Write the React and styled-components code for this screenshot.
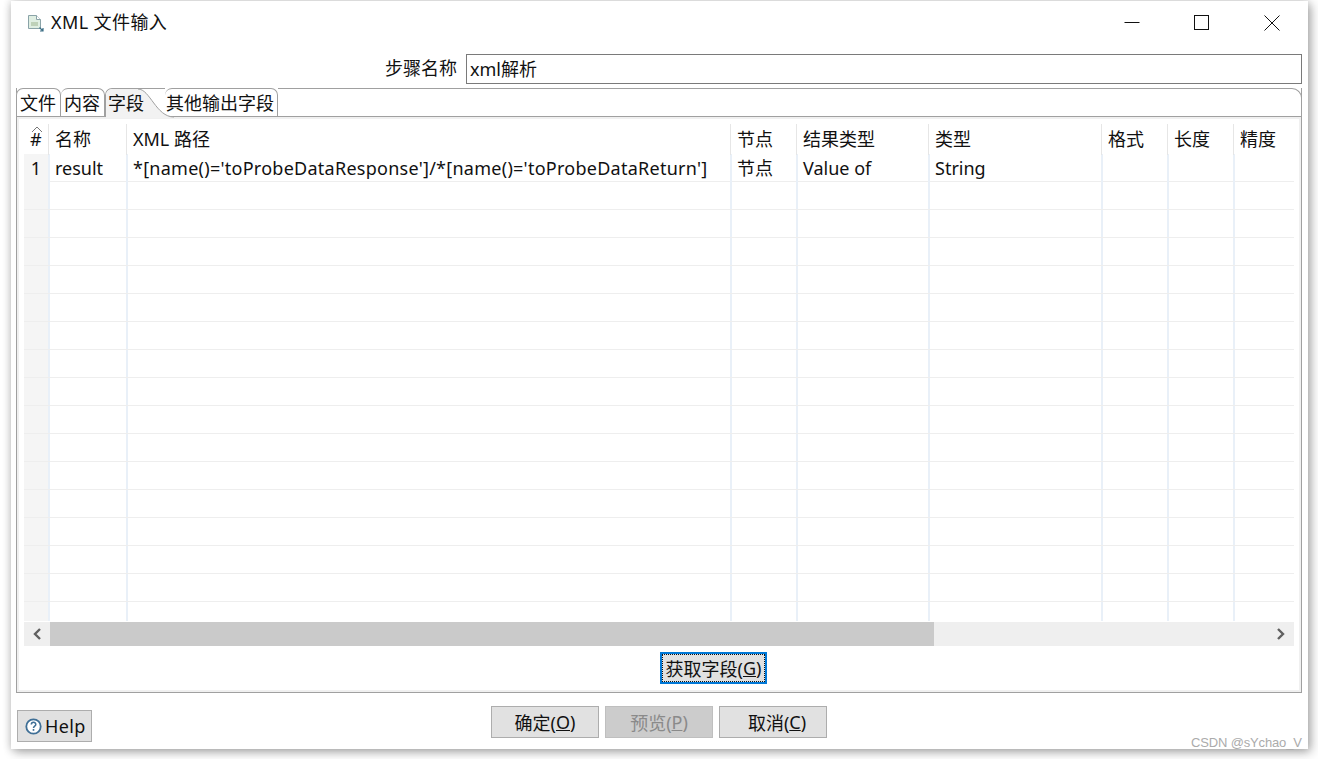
import React from "react"
import styled, { createGlobalStyle } from "styled-components"

const GlobalStyle = createGlobalStyle`
  html, body {
    margin: 0;
    padding: 0;
    background: #fff;
  }
  body {
    font-family: "Noto Sans", "Noto Sans CJK SC", sans-serif;
    font-size: 18px;
    color: #111;
  }
`

const Page = styled.div`
  position: relative;
  width: 1318px;
  height: 759px;
  padding: 1px 10px 10px 11px;
  box-sizing: border-box;
  overflow: hidden;
`

const Win = styled.div`
  height: 748px;
  background: #fff;
  display: flex;
  flex-direction: column;
  box-shadow: 3px 3px 10px rgba(0, 0, 0, 0.32), -1px 0 8px rgba(0, 0, 0, 0.14);
`

const TitleBar = styled.div`
  height: 44px;
  display: flex;
  align-items: center;
  padding-left: 16px;
  flex: none;
`

const Title = styled.span`
  margin: 0 0 2px 7px;
  line-height: 24px;
  letter-spacing: 0.4px;
`

const WinControls = styled.div`
  margin-left: auto;
  display: flex;
  padding-right: 28px;
  gap: 54px;
`

const StepRow = styled.div`
  margin-top: 9px;
  height: 30px;
  display: flex;
  align-items: center;
  justify-content: flex-end;
  gap: 9px;
  padding-right: 6px;
  flex: none;
`

const StepLabel = styled.span`
  margin-bottom: 4px;
`

const StepInput = styled.div`
  width: 836px;
  height: 30px;
  box-sizing: border-box;
  border: 1px solid #7a7a7a;
  padding-left: 3px;
  line-height: 29px;
`

const Folder = styled.div`
  margin: 4px 6px 0 5px;
  height: 605px;
  box-sizing: border-box;
  border: 1px solid #a0a0a0;
  border-top: 0;
  display: flex;
  flex-direction: column;
  flex: none;
`

const TabStrip = styled.div`
  height: 29px;
  box-sizing: border-box;
  margin: 0 -1px;
  display: flex;
  border-bottom: 1px solid #a0a0a0;
  flex: none;
`

const Tab = styled.div`
  position: relative;
  width: ${(p) => p.$w}px;
  height: 28px;
  box-sizing: border-box;
  border: 1px solid #a0a0a0;
  border-left-width: ${(p) => (p.$first ? 1 : 0)}px;
  border-bottom: 0;
  border-radius: 7px 7px 0 0;
  padding-left: 3px;
  line-height: 28px;
  white-space: nowrap;
  background: #fff;
`

const ActiveTab = styled(Tab)`
  border: 0;
  border-top: 1px solid #a0a0a0;
  border-left: 1px solid #a0a0a0;
  height: 29px;
  margin-bottom: -1px;
  border-radius: 7px 0 0 0;
  padding-left: 2px;
  background: transparent;
  z-index: 1;
`

const TabCurve = styled.svg`
  position: absolute;
  left: 0;
  top: -1px;
  z-index: -1;
`

const RestTab = styled(Tab)`
  padding-left: 1px;
`

const StripFill = styled.div`
  flex: 1;
  height: 28px;
  box-sizing: border-box;
  border: 1px solid #a0a0a0;
  border-left: 0;
  border-bottom: 0;
  border-radius: 0 10px 0 0;
`

const FolderBody = styled.div`
  flex: 1;
  box-shadow: inset 0 0 0 2px #f0f0f0;
`

const TableArea = styled.div`
  padding: 7px 7px 0 7px;
`

const Row = styled.div`
  display: grid;
  grid-template-columns: 26px 78px 604px 66px 132px 173px 66px 66px 59px;
  height: ${(p) => p.$h}px;
  box-sizing: border-box;
  border-bottom: ${(p) => (p.$line ? "1px solid #eeeeee" : "0")};
`

const HeadCell = styled.div`
  position: relative;
  padding-left: 6px;
  margin-left: -2px;
  border-left: 1px solid ${(p) => (p.$first ? "transparent" : "#e6e6e6")};
  line-height: 31px;
  white-space: nowrap;
`

const HashCell = styled(HeadCell)`
  margin-left: 0;
  padding-left: 5px;
`

const SortMark = styled.svg`
  position: absolute;
  left: 6px;
  top: 1px;
`

const Cell = styled.div`
  padding-left: 5px;
  margin-left: -2px;
  border-left: 2px solid #e9f0f8;
  line-height: 29px;
  white-space: nowrap;
  letter-spacing: ${(p) => p.$ls || "normal"};
`

const NumCell = styled.div`
  background: #f5f5f5;
  padding-right: 2px;
  text-align: center;
  line-height: 29px;
`

const ScrollBar = styled.div`
  display: flex;
  height: 24px;
  margin-top: 1px;
  background: #efefef;
`

const ScrollButton = styled.div`
  width: 26px;
  display: flex;
  align-items: center;
  justify-content: center;
  flex: none;
`

const Thumb = styled.div`
  width: 884px;
  background: #cacaca;
  flex: none;
`

const ScrollEnd = styled(ScrollButton)`
  margin-left: auto;
`

const FieldRow = styled.div`
  padding: 6px 0 0 643px;
`

const Btn = styled.div`
  width: ${(p) => p.$w || 108}px;
  height: 32px;
  box-sizing: border-box;
  background: ${(p) => (p.$off ? "#cccccc" : "#e1e1e1")};
  border: 1px solid ${(p) => (p.$off ? "#bfbfbf" : "#adadad")};
  color: ${(p) => (p.$off ? "#8a8a8a" : "#111")};
  display: flex;
  align-items: center;
  justify-content: center;
  white-space: nowrap;
  padding-left: ${(p) => p.$pl || 0}px;
`

const FocusBtn = styled(Btn)`
  width: 107px;
  border: 2px solid #0078d7;
  position: relative;
  &::after {
    content: "";
    position: absolute;
    inset: 0;
    border: 1px dotted #111;
  }
`

const Footer = styled.div`
  display: grid;
  grid-template-columns: 1fr auto 1fr;
`

const HelpBtn = styled(Btn)`
  margin: 17px 0 0 6px;
  width: 75px;
  justify-content: flex-start;
  padding-left: 7px;
  gap: 3px;
  letter-spacing: 0.4px;
`

const Actions = styled.div`
  margin: 13px 0 0 -1px;
  display: flex;
  gap: 6px;
`

const Mnemonic = styled.span`
  text-decoration: underline;
`

const Watermark = styled.span`
  position: absolute;
  left: 1191px;
  top: 735px;
  font-family: "Liberation Sans", sans-serif;
  font-size: 13px;
  line-height: 15px;
  letter-spacing: -0.15px;
  color: #ababab;
`

const XmlIcon = () => (
  <svg width="17" height="18" viewBox="0 0 17 18">
    <path d="M1.5 1.5h8l4 4v9h-12z" fill="#dfeee2" stroke="#8aa3a8" />
    <path d="M9.5 1.5v4h4" fill="#fff" stroke="#8aa3a8" />
    <path d="M4 9h7M4 11h7" stroke="#9db48f" />
    <path d="M12.5 13.5l3 3M16 14v3h-3" fill="none" stroke="#3d6f86" strokeWidth="1.2" />
  </svg>
)

const MinIcon = () => (
  <svg width="16" height="16" viewBox="0 0 16 16">
    <path d="M0.5 7.5h15" stroke="#111" />
  </svg>
)

const MaxIcon = () => (
  <svg width="16" height="16" viewBox="0 0 16 16">
    <rect x="0.5" y="0.5" width="14" height="14" fill="none" stroke="#111" />
  </svg>
)

const CloseIcon = () => (
  <svg width="16" height="16" viewBox="0 0 16 16">
    <path d="M0.5 0.5l15 15M15.5 0.5l-15 15" stroke="#111" />
  </svg>
)

const HelpIcon = () => (
  <svg width="17" height="17" viewBox="0 0 17 17">
    <circle cx="8.5" cy="8.5" r="7.2" fill="#fff" stroke="#3f6f96" strokeWidth="1.8" />
    <path d="M6.3 6.6c0-3 4.5-3 4.5-.2 0 1.8-2.3 1.8-2.3 3.6" fill="none" stroke="#3f6f96" strokeWidth="1.5" />
    <path d="M8.5 11v1.8" stroke="#3f6f96" strokeWidth="1.6" />
  </svg>
)

const Chevron = ({ flip }) => (
  <svg width="10" height="12" viewBox="0 0 10 12">
    <path d={flip ? "M2 1l5 5-5 5" : "M8 1L3 6l5 5"} fill="none" stroke="#606060" strokeWidth="2.4" />
  </svg>
)

const headers = ["名称", "XML 路径", "节点", "结果类型", "类型", "格式", "长度", "精度"]
const first = ["result", "*[name()='toProbeDataResponse']/*[name()='toProbeDataReturn']", "节点", "Value of", "String", "", "", ""]
const emptyRows = Array.from({ length: 15 }, (_, i) => i)
const blank = ["", "", "", "", "", "", "", ""]

export default function App() {
  return (
    <Page>
      <GlobalStyle />
      <Win>
        <TitleBar>
          <XmlIcon />
          <Title>XML 文件输入</Title>
          <WinControls>
            <MinIcon />
            <MaxIcon />
            <CloseIcon />
          </WinControls>
        </TitleBar>
        <StepRow>
          <StepLabel>步骤名称</StepLabel>
          <StepInput>xml解析</StepInput>
        </StepRow>
        <Folder>
          <TabStrip>
            <Tab $w={45} $first>文件</Tab>
            <Tab $w={44}>内容</Tab>
            <ActiveTab $w={60}>
              <TabCurve width="70" height="30" viewBox="0 0 70 30">
                <path d="M0 30V8Q0 1 7 1H32C44 1 50 29 68 29V30Z" fill="#f2f2f2" />
                <path d="M32 1C44 1 50 29 68 29" fill="none" stroke="#a0a0a0" />
              </TabCurve>
              字段
            </ActiveTab>
            <RestTab $w={113}>其他输出字段</RestTab>
            <StripFill />
          </TabStrip>
          <FolderBody>
            <TableArea>
              <Row $h={30}>
                <HashCell $first>
                  <SortMark width="12" height="8" viewBox="0 0 12 8">
                    <path d="M1 7l5-5 5 5" fill="none" stroke="#777" />
                  </SortMark>
                  #
                </HashCell>
                {headers.map((h) => (
                  <HeadCell key={h}>{h}</HeadCell>
                ))}
              </Row>
              <Row $h={28} $line>
                <NumCell>1</NumCell>
                {first.map((t, i) => (
                  <Cell key={i} $ls={i === 1 ? "0.26px" : undefined}>{t}</Cell>
                ))}
              </Row>
              {emptyRows.map((r) => (
                <Row key={r} $h={28} $line>
                  <NumCell />
                  {blank.map((t, i) => (
                    <Cell key={i}>{t}</Cell>
                  ))}
                </Row>
              ))}
              <Row $h={19}>
                <NumCell />
                {blank.map((t, i) => (
                  <Cell key={i}>{t}</Cell>
                ))}
              </Row>
              <ScrollBar>
                <ScrollButton>
                  <Chevron />
                </ScrollButton>
                <Thumb />
                <ScrollEnd>
                  <Chevron flip />
                </ScrollEnd>
              </ScrollBar>
            </TableArea>
            <FieldRow>
              <FocusBtn>
                获取字段(<Mnemonic>G</Mnemonic>)
              </FocusBtn>
            </FieldRow>
          </FolderBody>
        </Folder>
        <Footer>
          <HelpBtn>
            <HelpIcon />
            Help
          </HelpBtn>
          <Actions>
            <Btn>
              确定(<Mnemonic>O</Mnemonic>)
            </Btn>
            <Btn $off>
              预览(<Mnemonic>P</Mnemonic>)
            </Btn>
            <Btn $pl={8}>
              取消(<Mnemonic>C</Mnemonic>)
            </Btn>
          </Actions>
        </Footer>
      </Win>
      <Watermark>CSDN @sYchao_V</Watermark>
    </Page>
  )
}
